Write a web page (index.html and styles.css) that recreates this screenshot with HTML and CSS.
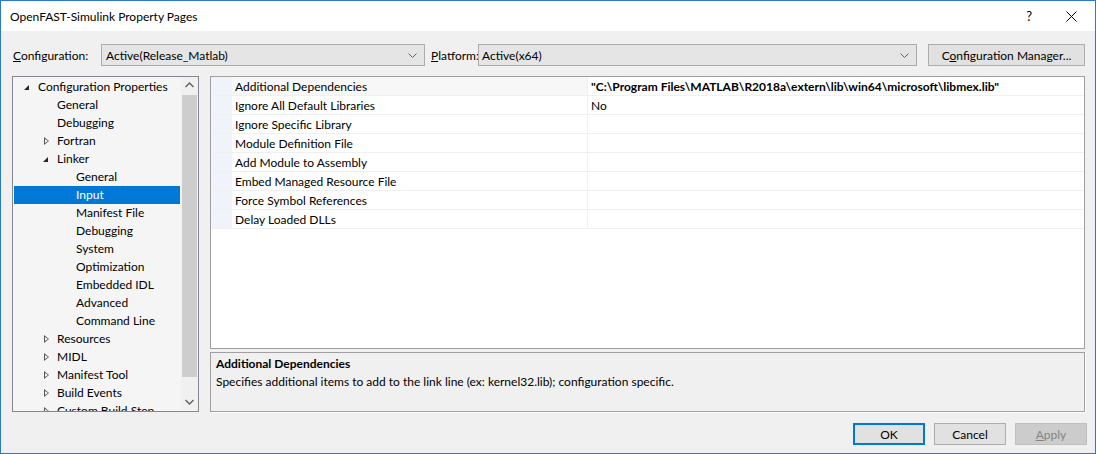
FILE: index.html
```html
<!DOCTYPE html>
<html lang="en">
	<head>
		<meta charset="UTF-8">
		<title>OpenFAST-Simulink Property Pages</title>
		<link rel="stylesheet" href="styles.css">
	</head>
	<body>
		<div class="window">
			<!-- title bar -->
			<div class="titlebar">
				<span class="title">OpenFAST-Simulink Property Pages</span>
				<span class="help">?</span>
				<svg class="close" width="11" height="11" viewBox="0 0 11 11">
					<path d="M0.5 0.5 L10.5 10.5 M10.5 0.5 L0.5 10.5" stroke="#000" stroke-width="1" fill="none" />
				</svg>
			</div>

			<div class="content">
				<!-- configuration / platform row -->
				<div class="toolbar">
					<span class="label label-config"><u>C</u>onfiguration:</span>
					<div class="combo combo-config">
						<span>Active(Release_Matlab)</span>
						<svg width="9" height="5" viewBox="0 0 9 5"><polyline points="0.5,0.5 4.5,4.5 8.5,0.5" fill="none" stroke="#606060" /></svg>
					</div>
					<span class="label label-platform"><u>P</u>latform:</span>
					<div class="combo combo-platform">
						<span>Active(x64)</span>
						<svg width="9" height="5" viewBox="0 0 9 5"><polyline points="0.5,0.5 4.5,4.5 8.5,0.5" fill="none" stroke="#606060" /></svg>
					</div>
					<button class="btn btn-manager">C<u>o</u>nfiguration Manager...</button>
				</div>

				<div class="main">
					<!-- tree -->
					<div class="tree">
						<ul class="nodes">
							<li class="node lvl0"><i class="open"></i>Configuration Properties</li>
							<li class="node lvl1">General</li>
							<li class="node lvl1">Debugging</li>
							<li class="node lvl1"><i class="shut"></i>Fortran</li>
							<li class="node lvl1"><i class="open"></i>Linker</li>
							<li class="node lvl2">General</li>
							<li class="node lvl2 selected">Input</li>
							<li class="node lvl2">Manifest File</li>
							<li class="node lvl2">Debugging</li>
							<li class="node lvl2">System</li>
							<li class="node lvl2">Optimization</li>
							<li class="node lvl2">Embedded IDL</li>
							<li class="node lvl2">Advanced</li>
							<li class="node lvl2">Command Line</li>
							<li class="node lvl1"><i class="shut"></i>Resources</li>
							<li class="node lvl1"><i class="shut"></i>MIDL</li>
							<li class="node lvl1"><i class="shut"></i>Manifest Tool</li>
							<li class="node lvl1"><i class="shut"></i>Build Events</li>
							<li class="node lvl1"><i class="shut"></i>Custom Build Step</li>
						</ul>
						<div class="scrollbar">
							<svg class="arrow" width="17" height="17" viewBox="0 0 17 17"><polyline points="4.5,10 8.5,6 12.5,10" fill="none" stroke="#606060" stroke-width="1.4" /></svg>
							<div class="track"><div class="thumb"></div></div>
							<svg class="arrow" width="17" height="17" viewBox="0 0 17 17"><polyline points="4.5,7 8.5,11 12.5,7" fill="none" stroke="#606060" stroke-width="1.4" /></svg>
						</div>
					</div>

					<div class="side">
						<!-- property grid -->
						<div class="grid">
							<div class="row current">
								<div class="gutter"></div>
								<div class="name">Additional Dependencies</div>
								<div class="value strong">"C:\Program Files\MATLAB\R2018a\extern\lib\win64\microsoft\libmex.lib"</div>
							</div>
							<div class="row">
								<div class="gutter"></div>
								<div class="name">Ignore All Default Libraries</div>
								<div class="value">No</div>
							</div>
							<div class="row">
								<div class="gutter"></div>
								<div class="name">Ignore Specific Library</div>
								<div class="value"></div>
							</div>
							<div class="row">
								<div class="gutter"></div>
								<div class="name">Module Definition File</div>
								<div class="value"></div>
							</div>
							<div class="row">
								<div class="gutter"></div>
								<div class="name">Add Module to Assembly</div>
								<div class="value"></div>
							</div>
							<div class="row">
								<div class="gutter"></div>
								<div class="name">Embed Managed Resource File</div>
								<div class="value"></div>
							</div>
							<div class="row">
								<div class="gutter"></div>
								<div class="name">Force Symbol References</div>
								<div class="value"></div>
							</div>
							<div class="row">
								<div class="gutter"></div>
								<div class="name">Delay Loaded DLLs</div>
								<div class="value"></div>
							</div>
						</div>

						<!-- description -->
						<div class="desc">
							<div class="desc-title">Additional Dependencies</div>
							<div class="desc-text">Specifies additional items to add to the link line (ex: kernel32.lib); configuration specific.</div>
						</div>
					</div>
				</div>

				<!-- dialog buttons -->
				<div class="footer">
					<button class="btn btn-ok">OK</button>
					<button class="btn">Cancel</button>
					<button class="btn btn-off"><u>A</u>pply</button>
				</div>
			</div>
		</div>
	</body>
</html>
```

FILE: styles.css
```css
* {
	margin: 0;
	padding: 0;
	box-sizing: border-box;
}

body {
	width: 1096px;
	height: 454px;
	font-family: Lato, "Noto Sans", sans-serif;
	font-size: 12px;
	color: #000;
	overflow: hidden;
}

.window {
	width: 1096px;
	height: 454px;
	border: 1px solid #2b79c9;
	display: flex;
	flex-direction: column;
	background: #f0f0f0;
}

/* title bar */
.titlebar {
	height: 30px;
	background: #fff;
	display: flex;
	align-items: center;
	padding-left: 9px;
	flex-shrink: 0;
}

.title {
	flex: 1;
}

.help {
	font-size: 13px;
	margin-right: 34px;
}

.close {
	margin-right: 18px;
}

.content {
	flex: 1;
	display: flex;
	flex-direction: column;
	padding: 13px 10px 0 11px;
}

/* configuration row */
.toolbar {
	display: flex;
	align-items: center;
	height: 22px;
}

.label {
	flex-shrink: 0;
	white-space: nowrap;
}

.label-config {
	width: 89px;
	padding-left: 1px;
}

.label-platform {
	width: 53px;
	padding-left: 6px;
}

.combo {
	flex-shrink: 0;
	height: 22px;
	background: #e5e5e5;
	border: 1px solid #acacac;
	display: flex;
	align-items: center;
	justify-content: space-between;
	padding: 0 7px 0 4px;
}

.combo-config {
	width: 324px;
}

.combo-platform {
	width: 439px;
	padding-left: 3px;
}

.btn {
	font-family: inherit;
	font-size: 12px;
	height: 22px;
	background: #e1e1e1;
	border: 1px solid #adadad;
	width: 72px;
}

.btn-manager {
	width: 158px;
	margin-left: 11px;
}

/* tree + grid */
.main {
	display: flex;
	margin-top: 10px;
	height: 336px;
}

.tree {
	width: 187px;
	height: 336px;
	border: 1px solid #828790;
	background: #f5f5f5;
	display: flex;
	overflow: hidden;
	padding-top: 1px;
}

.nodes {
	list-style: none;
	flex: 1;
	padding-left: 1px;
	padding-right: 1px;
}

.node {
	height: 18px;
	line-height: 18px;
	white-space: nowrap;
	position: relative;
}

.lvl0 {
	padding-left: 24px;
}

.lvl1 {
	padding-left: 43px;
}

.lvl2 {
	padding-left: 62px;
}

.selected {
	background: #0078d7;
	color: #fff;
}

.node i {
	position: absolute;
	display: block;
}

/* expanded arrow */
.node i.open {
	width: 0;
	height: 0;
	border-left: 5px solid transparent;
	border-bottom: 5px solid #262626;
	top: 7px;
}

.lvl0 i.open {
	left: 10px;
}

.lvl1 i.open {
	left: 29px;
}

/* collapsed arrow */
.node i.shut {
	width: 0;
	height: 0;
	border-top: 4px solid transparent;
	border-bottom: 4px solid transparent;
	border-left: 5px solid #555;
	top: 5px;
	left: 30px;
}

.node i.shut::after {
	content: "";
	position: absolute;
	border-top: 2.5px solid transparent;
	border-bottom: 2.5px solid transparent;
	border-left: 3px solid #f5f5f5;
	top: -2.5px;
	left: -4.3px;
}

.scrollbar {
	width: 17px;
	height: 100%;
	background: #f0f0f0;
	display: flex;
	flex-direction: column;
	margin-top: -1px;
}

.arrow {
	flex-shrink: 0;
}

.track {
	flex: 1;
	padding: 1px 1px 0 1px;
}

.thumb {
	height: 282px;
	background: #cdcdcd;
}

.side {
	flex: 1;
	margin-left: 11px;
	display: flex;
	flex-direction: column;
}

.grid {
	height: 275px;
	border: 1px solid #a0a0a0;
	background: #fff;
}

.row {
	display: flex;
	height: 19px;
	line-height: 19px;
	border-bottom: 1px solid #f0f0f0;
}

.gutter {
	width: 21px;
	background: #f0f4fa;
}

.name {
	width: 356px;
	padding-left: 3px;
	border-right: 1px solid #f0f0f0;
	white-space: nowrap;
}

.row.current .name {
	background: #f7f7f7;
}

.value {
	flex: 1;
	padding-left: 3px;
	white-space: nowrap;
}

.strong {
	font-weight: bold;
}

.desc {
	margin-top: 3px;
	height: 60px;
	border: 1px solid #a0a0a0;
	box-shadow: 1px 1px 0 #fff;
	padding: 2px 5px;
	line-height: 18px;
}

.desc-title {
	font-weight: bold;
}

/* dialog buttons */
.footer {
	display: flex;
	justify-content: flex-end;
	gap: 9px;
	margin-top: 11px;
	margin-right: -2px;
}

.btn-ok {
	border: 2px solid #0078d7;
}

.btn-off {
	background: #cccccc;
	border-color: #bfbfbf;
	color: #838383;
}
```
